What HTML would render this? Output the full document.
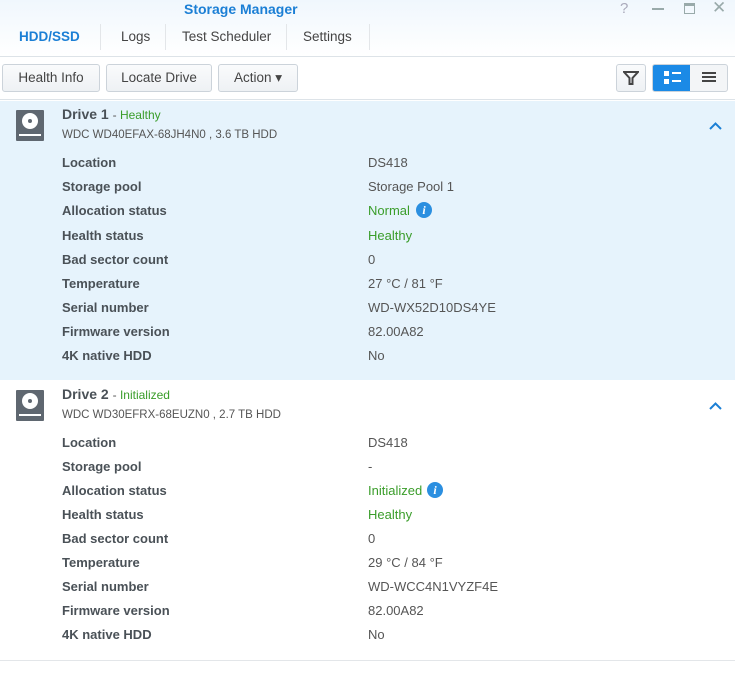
<!DOCTYPE html><html><head><style>
body{margin:0;width:735px;height:686px;background:#fff;font-family:"Liberation Sans",sans-serif;position:relative;overflow:hidden;color:#555}
.a{position:absolute;white-space:nowrap}
.top{position:absolute;left:0;top:0;width:735px;height:56px;background:linear-gradient(#f0f7fd,#fff);border-bottom:1px solid #dde3e8}
.tab{font-size:13.5px;color:#444;top:29px}
.sep{position:absolute;width:1px;height:26px;top:24px;background:#e3e6e9}
.btn{position:absolute;top:64px;height:26px;border:1px solid #ccd3da;border-radius:3px;background:linear-gradient(#fafbfc,#eef1f4);font-size:13.5px;color:#444;line-height:26px;text-align:center}
.sec{position:absolute;left:0;width:735px}
.lab{font-size:13px;font-weight:bold;color:#4a5157;left:62px}
.val{font-size:13px;color:#555;left:368px}
.g{color:#3a9d2a}
.info{position:absolute;top:-1px;width:16px;height:16px;border-radius:50%;background:#2b8fe0;color:#fff;font:italic bold 12px "Liberation Serif",serif;text-align:center;line-height:16px}
</style></head><body>
<div class="top"></div>
<div class="a" style="left:184px;top:1px;font-size:14px;font-weight:bold;color:#1b7fd5">Storage Manager</div>
<div class="a" style="left:620px;top:0;font-size:15px;color:#aab">?</div>
<div class="a" style="left:652px;top:8px;width:12px;height:2px;background:#9aa"></div>
<div class="a" style="left:684px;top:3px;width:9px;height:7px;border:1.5px solid #9aa;border-top-width:3px"></div>
<div class="a" style="left:712px;top:-2px;font-size:17px;color:#9aa">✕</div>
<div class="a tab" style="left:19px;color:#1b7fd5;font-weight:bold">HDD/SSD</div>
<div class="sep" style="left:100px"></div>
<div class="a tab" style="left:121px">Logs</div>
<div class="sep" style="left:165px"></div>
<div class="a tab" style="left:182px">Test Scheduler</div>
<div class="sep" style="left:286px"></div>
<div class="a tab" style="left:303px">Settings</div>
<div class="sep" style="left:369px"></div>
<div class="btn" style="left:2px;width:96px">Health Info</div>
<div class="btn" style="left:106px;width:104px">Locate Drive</div>
<div class="btn" style="left:218px;width:78px">Action ▾</div>
<div class="btn" style="left:616px;width:28px"><svg width="16" height="16" viewBox="0 0 16 16" style="margin-top:5px"><path d="M1 2h14l-5.5 6v6h-3V8z" fill="none" stroke="#444" stroke-width="2"/></svg></div>
<div class="btn" style="left:652px;width:74px;background:linear-gradient(90deg,#1b8ae6 50%,#f3f5f7 50%)"></div>
<div class="a" style="left:664px;top:71px;width:5px;height:5px;background:#fff"></div><div class="a" style="left:672px;top:72px;width:9px;height:2px;background:#fff"></div>
<div class="a" style="left:664px;top:79px;width:5px;height:5px;background:#fff"></div><div class="a" style="left:672px;top:80px;width:9px;height:2px;background:#fff"></div>
<div class="a" style="left:702px;top:72px;width:14px;height:2px;background:#444;box-shadow:0 4px #444,0 8px #444"></div>
<div class="a" style="left:0;top:99px;width:735px;height:1px;background:#dde3e8"></div>

<div class="sec" style="top:101px;height:279px;background:#e6f3fc"></div>
<div class="sec" style="top:380px;height:280px;border-bottom:1px solid #e3e6e9"></div>

<!--drive 1-->
<div class="a" style="left:16px;top:110px;width:28px;height:31px;background:#5f6770;border-radius:1px"></div>
<div class="a" style="left:22px;top:113px;width:16px;height:16px;background:#fff;border-radius:50%"></div>
<div class="a" style="left:28px;top:119px;width:4px;height:4px;background:#5f6770;border-radius:50%"></div>
<div class="a" style="left:19px;top:134px;width:22px;height:2px;background:#fff"></div>
<div class="a" style="left:62px;top:106px;font-size:14px;font-weight:bold;color:#4a5157">Drive 1 <span style="font-size:12px;font-weight:normal;color:#555">- <span class="g">Healthy</span></span></div>
<div class="a" style="left:62px;top:129px;font-size:11.5px;color:#555">WDC WD40EFAX-68JH4N0 , 3.6 TB HDD</div>
<svg class="a" style="left:708px;top:121px" width="15" height="10" viewBox="0 0 15 10"><path d="M2 8L7.5 2.5L13 8" fill="none" stroke="#1b7fd5" stroke-width="2"/></svg>
<div class="a lab" style="top:155px">Location</div><div class="a val" style="top:155px">DS418</div>
<div class="a lab" style="top:179px">Storage pool</div><div class="a val" style="top:179px">Storage Pool 1</div>
<div class="a lab" style="top:203px">Allocation status</div><div class="a val g" style="top:203px">Normal<span class="info" style="left:48px">i</span></div>
<div class="a lab" style="top:228px">Health status</div><div class="a val g" style="top:228px">Healthy</div>
<div class="a lab" style="top:252px">Bad sector count</div><div class="a val" style="top:252px">0</div>
<div class="a lab" style="top:276px">Temperature</div><div class="a val" style="top:276px">27 °C / 81 °F</div>
<div class="a lab" style="top:300px">Serial number</div><div class="a val" style="top:300px">WD-WX52D10DS4YE</div>
<div class="a lab" style="top:324px">Firmware version</div><div class="a val" style="top:324px">82.00A82</div>
<div class="a lab" style="top:348px">4K native HDD</div><div class="a val" style="top:348px">No</div>

<!--drive 2-->
<div class="a" style="left:16px;top:390px;width:28px;height:31px;background:#5f6770;border-radius:1px"></div>
<div class="a" style="left:22px;top:393px;width:16px;height:16px;background:#fff;border-radius:50%"></div>
<div class="a" style="left:28px;top:399px;width:4px;height:4px;background:#5f6770;border-radius:50%"></div>
<div class="a" style="left:19px;top:414px;width:22px;height:2px;background:#fff"></div>
<div class="a" style="left:62px;top:386px;font-size:14px;font-weight:bold;color:#4a5157">Drive 2 <span style="font-size:12px;font-weight:normal;color:#555">- <span class="g">Initialized</span></span></div>
<div class="a" style="left:62px;top:409px;font-size:11.5px;color:#555">WDC WD30EFRX-68EUZN0 , 2.7 TB HDD</div>
<svg class="a" style="left:708px;top:401px" width="15" height="10" viewBox="0 0 15 10"><path d="M2 8L7.5 2.5L13 8" fill="none" stroke="#1b7fd5" stroke-width="2"/></svg>
<div class="a lab" style="top:435px">Location</div><div class="a val" style="top:435px">DS418</div>
<div class="a lab" style="top:459px">Storage pool</div><div class="a val" style="top:459px">-</div>
<div class="a lab" style="top:483px">Allocation status</div><div class="a val g" style="top:483px">Initialized<span class="info" style="left:59px">i</span></div>
<div class="a lab" style="top:507px">Health status</div><div class="a val g" style="top:507px">Healthy</div>
<div class="a lab" style="top:531px">Bad sector count</div><div class="a val" style="top:531px">0</div>
<div class="a lab" style="top:555px">Temperature</div><div class="a val" style="top:555px">29 °C / 84 °F</div>
<div class="a lab" style="top:579px">Serial number</div><div class="a val" style="top:579px">WD-WCC4N1VYZF4E</div>
<div class="a lab" style="top:603px">Firmware version</div><div class="a val" style="top:603px">82.00A82</div>
<div class="a lab" style="top:627px">4K native HDD</div><div class="a val" style="top:627px">No</div>
</body></html>
